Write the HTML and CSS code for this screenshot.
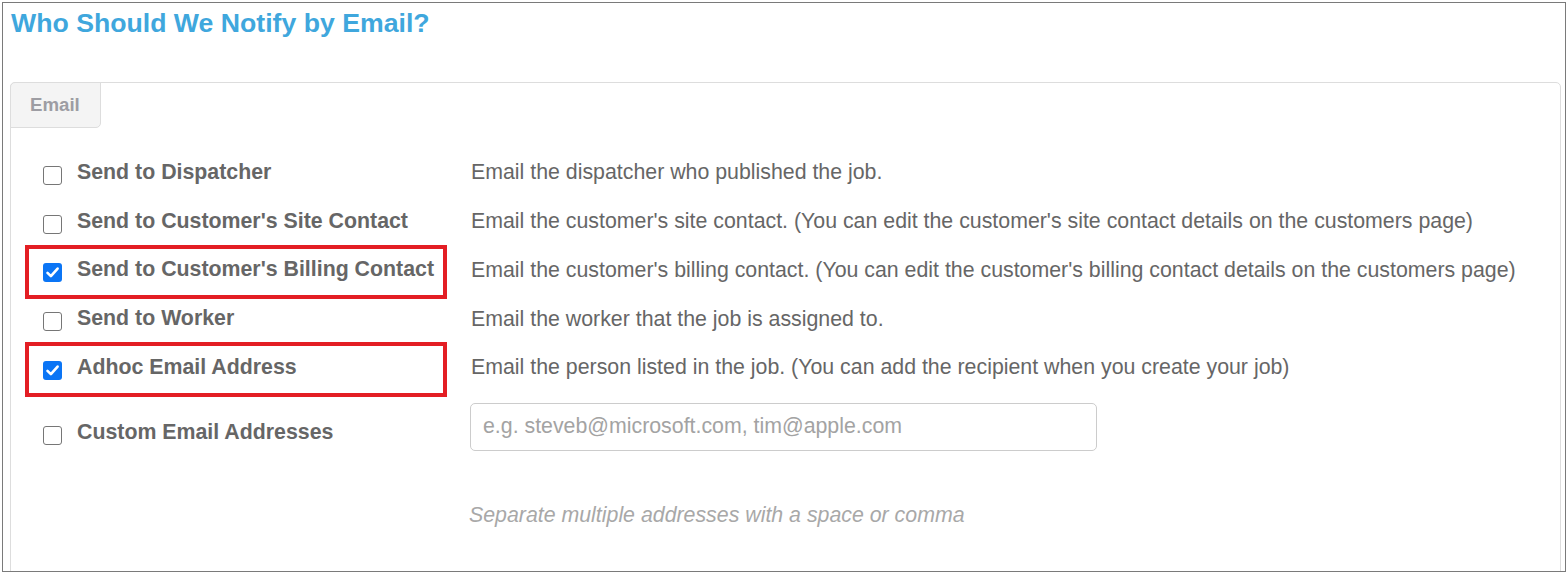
FILE: index.html
```html
<!DOCTYPE html>
<html lang="en">
<head>
<meta charset="utf-8">
<title>Who Should We Notify by Email?</title>
<link rel="stylesheet" href="styles.css">
</head>
<body>
<div class="frame">
  <h1 class="title">Who Should We Notify by Email?</h1>
  <div class="panel">
    <div class="tab">Email</div>
    <div class="options">
      <div class="row">
        <label class="opt"><input type="checkbox" class="cb"><span>Send to Dispatcher</span></label>
        <div class="desc">Email the dispatcher who published the job.</div>
      </div>
      <div class="row">
        <label class="opt"><input type="checkbox" class="cb"><span>Send to Customer's Site Contact</span></label>
        <div class="desc">Email the customer's site contact. (You can edit the customer's site contact details on the customers page)</div>
      </div>
      <div class="row">
        <label class="opt marked"><input type="checkbox" class="cb" checked><span>Send to Customer's Billing Contact</span></label>
        <div class="desc">Email the customer's billing contact. (You can edit the customer's billing contact details on the customers page)</div>
      </div>
      <div class="row">
        <label class="opt"><input type="checkbox" class="cb"><span>Send to Worker</span></label>
        <div class="desc">Email the worker that the job is assigned to.</div>
      </div>
      <div class="row">
        <label class="opt marked"><input type="checkbox" class="cb" checked><span>Adhoc Email Address</span></label>
        <div class="desc">Email the person listed in the job. (You can add the recipient when you create your job)</div>
      </div>
      <div class="row row-custom">
        <label class="opt opt-custom"><input type="checkbox" class="cb"><span>Custom Email Addresses</span></label>
        <div class="custom">
          <input type="text" class="addr" placeholder="e.g. steveb@microsoft.com, tim@apple.com">
          <div class="hint">Separate multiple addresses with a space or comma</div>
        </div>
      </div>
    </div>
  </div>
</div>
</body>
</html>
```
FILE: styles.css
```css
html, body {
  margin: 0;
  padding: 0;
  background: #ffffff;
}
body {
  padding: 2px 0 0 2px;
  font-family: "Liberation Sans", Arial, sans-serif;
  color: #666666;
}
.frame {
  box-sizing: border-box;
  width: 1564px;
  height: 570px;
  border: 1px solid #7a7a7a;
  overflow: hidden;
  background: #ffffff;
}
.title {
  margin: 0;
  padding: 5px 0 0 8px;
  font-size: 26.67px;
  line-height: 30px;
  font-weight: bold;
  color: #3fa7dd;
}
.panel {
  margin: 44px 4px 0 7px;
  border: 1px solid #dddddd;
  border-radius: 5px;
  height: 700px;
}
.tab {
  box-sizing: border-box;
  width: 91px;
  height: 46px;
  margin: -1px 0 0 -1px;
  padding-left: 19px;
  border: 1px solid #dddddd;
  border-radius: 5px 0 5px 0;
  background: #f4f4f4;
  color: #9d9da3;
  font-size: 18.67px;
  font-weight: bold;
  line-height: 44px;
}
.options {
  padding: 20px 0 0 32px;
}
.row {
  display: grid;
  grid-template-columns: 428px 1fr;
  height: 48.75px;
  align-items: center;
}
.opt {
  position: relative;
  display: flex;
  align-items: center;
  gap: 15px;
  height: 100%;
  font-size: 21.33px;
  font-weight: bold;
  color: #666666;
  white-space: nowrap;
}
.opt.marked::after {
  content: "";
  position: absolute;
  top: -1px;
  bottom: -5px;
  left: -18px;
  right: 24px;
  border: 4px solid #e31e24;
  pointer-events: none;
}
.cb {
  appearance: none;
  -webkit-appearance: none;
  box-sizing: border-box;
  flex: none;
  width: 19px;
  height: 19px;
  margin: 6px 0 0 0;
  border: 1.5px solid #767676;
  border-radius: 3px;
  background: #ffffff;
}
.cb:checked {
  border: none;
  background-color: #0b75f5;
  background-image: url("data:image/svg+xml;utf8,<svg xmlns='http://www.w3.org/2000/svg' viewBox='0 0 19 19'><path d='M4.5 9.8 L7.9 13.2 L14.6 5.6' fill='none' stroke='white' stroke-width='2.6' stroke-linecap='round' stroke-linejoin='round'/></svg>");
  background-size: 100% 100%;
}
.desc {
  font-size: 21.33px;
  line-height: 28px;
  color: #666666;
  white-space: nowrap;
}
.row-custom {
  height: auto;
  align-items: start;
  margin-top: 11px;
}
.opt-custom {
  height: 28px;
  margin-top: 16px;
}
.custom {
  display: flex;
  flex-direction: column;
  align-items: flex-start;
}
.addr {
  box-sizing: border-box;
  width: 627px;
  height: 48px;
  margin: 0 0 0 -1px;
  padding: 0 12px;
  border: 1px solid #cccccc;
  border-radius: 5px;
  font-family: "Liberation Sans", Arial, sans-serif;
  font-size: 21.33px;
  color: #555555;
  outline: none;
}
.addr::placeholder {
  color: #a3a3a3;
}
.hint {
  margin: 50px 0 0 -2px;
  font-size: 21.33px;
  line-height: 28px;
  font-style: italic;
  color: #a8a8a8;
  white-space: nowrap;
}
```
